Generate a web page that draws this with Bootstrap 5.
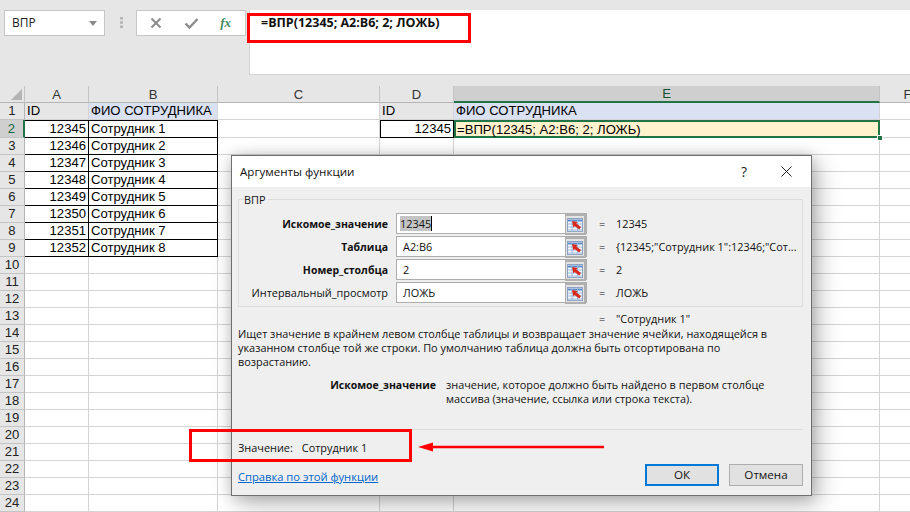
<!DOCTYPE html>
<html lang="ru">
<head>
<meta charset="utf-8">
<title>ВПР</title>
<link rel="stylesheet" href="https://cdn.jsdelivr.net/npm/bootstrap@5.3.0/dist/css/bootstrap.min.css">
<style>
html,body{width:910px;height:512px;overflow:hidden;margin:0;background:#fff}
.xl-app{width:910px;height:512px;overflow:hidden;font-family:"Liberation Sans",Arial,sans-serif;color:#000}
.xl-bar{height:86px;background:#e6e6e6;padding:10px 0 11px 4px;align-items:flex-start}
.xl-name{width:101px;height:26px;background:#fff;border:1px solid #c6c6c6;padding:0 7px;font:12px/24px "Open Sans",sans-serif;color:#222}
.xl-caret{width:0;height:0;border:4px solid transparent;border-top:5px solid #8a8a8a;border-bottom:0}
.xl-dots{width:31px;padding:7px 0 0 15px;line-height:0}
.xl-fbtns{width:110px;height:26px;background:#fff;border:1px solid #c6c6c6;padding:0 14px 0 13px}
.xl-fx{font:italic bold 13px/14px "Liberation Serif",serif;color:#3f8a60}
.xl-input{width:661px;height:65px;background:#fff;border:1px solid #d4d4d4;border-right:0;border-top:0;margin-left:3px}
.xl-ftext{font:bold 12.5px/16px "Open Sans",sans-serif;padding:5px 0 0 11px;color:#111}
.xl-grid{table-layout:fixed;border-collapse:separate;border-spacing:0;width:936px}
.xl-grid th,.xl-grid td{height:17px;padding:0 2px;font-size:13.1px;line-height:16px;font-weight:400;white-space:nowrap;overflow:hidden;border-right:1px solid #d4d4d4;border-bottom:1px solid #d4d4d4;vertical-align:bottom}
.xl-grid thead th{background:#e6e6e6;text-align:center;height:16px;border-right:1px solid #c4c4c4;border-bottom:1px solid #b5b5b5;color:#333;line-height:15px}
.xl-grid thead th.xl-sel{background:#cfcfcf;color:#0f5132;border-bottom:2px solid #217346}
.xl-grid tbody th{background:#e6e6e6;text-align:center;border-right:1px solid #b5b5b5;border-bottom:1px solid #c4c4c4;color:#222;padding:0}
.xl-grid tbody th.xl-sel{background:#cfcfcf;color:#0f6b3e;border-right:2px solid #217346}
.xl-corner{position:relative}
.xl-corner::after{content:"";position:absolute;right:2px;bottom:2px;border-style:solid;border-width:0 0 11px 11px;border-color:transparent transparent #b4b4b4 transparent}
.xl-grey{background:#e7e6e6}
.xl-blue{background:#d9e1f2}
.xl-num{text-align:right}
.xl-box{border:1px solid #000!important}
.xl-box-n{border-top:0!important}
.xl-box-l{border-left:0!important}
.xl-cur{position:relative;background:#fff2cc;overflow:visible!important;border:0!important;box-shadow:inset 0 0 0 2px #217346;padding-left:3px!important}
.xl-handle{position:absolute;right:-3px;bottom:-3px;width:6px;height:6px;background:#217346;border:1px solid #fff}
.xl-dlg{left:231px;top:155px;width:581px;height:341px;background:#efefef;border:1px solid #6f6f6f;box-shadow:6px 8px 22px rgba(0,0,0,.28),0 0 12px rgba(0,0,0,.16);font:10.9px/14px "Open Sans",sans-serif;color:#111}
.xl-dtitle{height:31px;background:#fff;padding:0 8px;font-size:11.6px}
.xl-dctl{font-size:14px;color:#222;gap:34px;padding-right:11px}
.xl-group{margin:12px 8px 0 6px;height:108px;border:1px solid #dcdcdc;padding:12px 0 0 0;position:relative}
.xl-legend{position:absolute;left:5px;top:-7px;background:#efefef;padding:0 2px 0 0;line-height:14px}
.xl-argrow{height:23px}
.xl-arglab{width:157px;text-align:right;padding-right:8px;white-space:nowrap}
.xl-field{width:191px;height:21px;border:1px solid #adadad;background:#fff}
.xl-val{flex:1 1 0;padding-left:6px;line-height:19px;color:#111}
.xl-val-first{padding-left:3px}
.xl-pick{width:21px;height:21px;background:#e3e3e3;border:2px solid #b0b0b0;border-left-width:1px;padding:1px}
.xl-hl{background:#c4c4c4;border-right:1px solid #000}
.xl-eq{width:23px;text-align:center;padding-left:7px}
.xl-res{padding-left:6px;white-space:nowrap}
.xl-b{font-weight:700;font-size:10.5px}
.xl-sum{padding:5px 6px 0 355px}
.xl-desc{padding:1px 33px 0 6px;margin:0}
.xl-param{padding:9px 30px 0 6px;margin:0}
.xl-plab{width:208px;text-align:right;font-weight:700;font-size:10.5px;padding-right:10px;flex:none}
.xl-rule{height:1px;background:#dcdcdc;margin:23px 8px 0 6px}
.xl-foot{padding:11px 8px 0 6px}
.xl-sp{margin-left:9px}
.xl-row-btm{margin-top:9px}
.xl-link{color:#0066cc;text-decoration:underline;font-size:11.2px;padding-top:3px}
.xl-gap{gap:10px}
.xl-btn{width:74px;height:22px;border:1px solid #adadad;background:#e1e1e1;border-radius:0;font:11.6px/18px "Open Sans",sans-serif;color:#111;padding:0}
.xl-btn-main{border:2px solid #0078d7}
.xl-red{border:3px solid #f00}
.xl-r1{left:247px;top:13px;width:224px;height:30px}
.xl-r2{left:189px;top:429px;width:223px;height:33px}
.xl-arrow{left:416px;top:440px}
</style>
</head>
<body>
<div class="xl-app position-relative">
  <div class="xl-bar d-flex">
    <div class="xl-name d-flex justify-content-between align-items-center"><span>ВПР</span><span class="xl-caret"></span></div>
    <div class="xl-dots"><svg width="3" height="11" viewBox="0 0 3 11"><path d="M0 0h3v2.500H0zM0 4.200h3v2.500H0zM0 8.500h3V11H0z" fill="#b4b4b4"/></svg></div>
    <div class="xl-fbtns d-flex justify-content-between align-items-center">
      <svg width="12" height="12" viewBox="0 0 12 12"><path d="M1.500 1.500l9 9M10.500 1.500l-9 9" stroke="#8c8c8c" stroke-width="2" fill="none"/></svg>
      <svg width="15" height="12" viewBox="0 0 15 12"><path d="M1.500 6.500l4 4 8-8.500" stroke="#8c8c8c" stroke-width="2.400" fill="none"/></svg>
      <span class="xl-fx">fx</span>
    </div>
    <div class="xl-input"><div class="xl-ftext">=ВПР(12345; A2:B6; 2; ЛОЖЬ)</div></div>
  </div>
  <table class="xl-grid">
    <colgroup><col style="width:25px"><col style="width:64px"><col style="width:129px"><col style="width:162px"><col style="width:74px"><col style="width:426px"><col></colgroup>
    <thead><tr><th class="xl-corner"></th><th>A</th><th>B</th><th>C</th><th>D</th><th class="xl-sel">E</th><th>F</th></tr></thead>
    <tbody>
      <tr><th>1</th><td class="xl-grey">ID</td><td class="xl-blue">ФИО СОТРУДНИКА</td><td></td><td class="xl-grey">ID</td><td class="xl-blue">ФИО СОТРУДНИКА</td><td></td></tr>
      <tr><th class="xl-sel">2</th><td class="xl-num xl-box xl-box-l">12345</td><td class="xl-box xl-box-l">Сотрудник 1</td><td></td><td class="xl-num xl-box">12345</td><td class="xl-cur">=ВПР(12345; A2:B6; 2; ЛОЖЬ)<span class="xl-handle"></span></td><td></td></tr>
      <tr><th>3</th><td class="xl-num xl-box xl-box-n xl-box-l">12346</td><td class="xl-box xl-box-n xl-box-l">Сотрудник 2</td><td></td><td></td><td></td><td></td></tr>
      <tr><th>4</th><td class="xl-num xl-box xl-box-n xl-box-l">12347</td><td class="xl-box xl-box-n xl-box-l">Сотрудник 3</td><td></td><td></td><td></td><td></td></tr>
      <tr><th>5</th><td class="xl-num xl-box xl-box-n xl-box-l">12348</td><td class="xl-box xl-box-n xl-box-l">Сотрудник 4</td><td></td><td></td><td></td><td></td></tr>
      <tr><th>6</th><td class="xl-num xl-box xl-box-n xl-box-l">12349</td><td class="xl-box xl-box-n xl-box-l">Сотрудник 5</td><td></td><td></td><td></td><td></td></tr>
      <tr><th>7</th><td class="xl-num xl-box xl-box-n xl-box-l">12350</td><td class="xl-box xl-box-n xl-box-l">Сотрудник 6</td><td></td><td></td><td></td><td></td></tr>
      <tr><th>8</th><td class="xl-num xl-box xl-box-n xl-box-l">12351</td><td class="xl-box xl-box-n xl-box-l">Сотрудник 7</td><td></td><td></td><td></td><td></td></tr>
      <tr><th>9</th><td class="xl-num xl-box xl-box-n xl-box-l">12352</td><td class="xl-box xl-box-n xl-box-l">Сотрудник 8</td><td></td><td></td><td></td><td></td></tr>
      <tr><th>10</th><td></td><td></td><td></td><td></td><td></td><td></td></tr>
      <tr><th>11</th><td></td><td></td><td></td><td></td><td></td><td></td></tr>
      <tr><th>12</th><td></td><td></td><td></td><td></td><td></td><td></td></tr>
      <tr><th>13</th><td></td><td></td><td></td><td></td><td></td><td></td></tr>
      <tr><th>14</th><td></td><td></td><td></td><td></td><td></td><td></td></tr>
      <tr><th>15</th><td></td><td></td><td></td><td></td><td></td><td></td></tr>
      <tr><th>16</th><td></td><td></td><td></td><td></td><td></td><td></td></tr>
      <tr><th>17</th><td></td><td></td><td></td><td></td><td></td><td></td></tr>
      <tr><th>18</th><td></td><td></td><td></td><td></td><td></td><td></td></tr>
      <tr><th>19</th><td></td><td></td><td></td><td></td><td></td><td></td></tr>
      <tr><th>20</th><td></td><td></td><td></td><td></td><td></td><td></td></tr>
      <tr><th>21</th><td></td><td></td><td></td><td></td><td></td><td></td></tr>
      <tr><th>22</th><td></td><td></td><td></td><td></td><td></td><td></td></tr>
      <tr><th>23</th><td></td><td></td><td></td><td></td><td></td><td></td></tr>
      <tr><th>24</th><td></td><td></td><td></td><td></td><td></td><td></td></tr>
    </tbody>
  </table>

  <div class="xl-dlg position-absolute">
    <div class="xl-dtitle d-flex justify-content-between align-items-center">
      <span>Аргументы функции</span>
      <span class="d-flex align-items-center xl-dctl"><span>?</span>
        <svg width="11" height="11" viewBox="0 0 11 11"><path d="M.5.500l10 10M10.500.500l-10 10" stroke="#222" stroke-width="1" fill="none"/></svg></span>
    </div>
    <div class="xl-group">
      <div class="xl-legend">ВПР</div>
      <div class="xl-argrow d-flex align-items-center"><div class="xl-arglab xl-b">Искомое_значение</div><div class="xl-field d-flex"><div class="xl-val xl-val-first"><span class="xl-hl">12345</span></div><div class="xl-pick"><svg width="17" height="15" viewBox="0 0 17 15"><use href="#xl-refedit"/></svg></div></div><div class="xl-eq">=</div><div class="xl-res">12345</div></div>
      <div class="xl-argrow d-flex align-items-center"><div class="xl-arglab xl-b">Таблица</div><div class="xl-field d-flex"><div class="xl-val">A2:B6</div><div class="xl-pick"><svg width="17" height="15" viewBox="0 0 17 15"><use href="#xl-refedit"/></svg></div></div><div class="xl-eq">=</div><div class="xl-res">{12345;"Сотрудник 1":12346;"Сот...</div></div>
      <div class="xl-argrow d-flex align-items-center"><div class="xl-arglab xl-b">Номер_столбца</div><div class="xl-field d-flex"><div class="xl-val">2</div><div class="xl-pick"><svg width="17" height="15" viewBox="0 0 17 15"><use href="#xl-refedit"/></svg></div></div><div class="xl-eq">=</div><div class="xl-res">2</div></div>
      <div class="xl-argrow d-flex align-items-center"><div class="xl-arglab">Интервальный_просмотр</div><div class="xl-field d-flex"><div class="xl-val">ЛОЖЬ</div><div class="xl-pick"><svg width="17" height="15" viewBox="0 0 17 15"><use href="#xl-refedit"/></svg></div></div><div class="xl-eq">=</div><div class="xl-res">ЛОЖЬ</div></div>
    </div>
    <div class="d-flex xl-sum"><div class="xl-eq">=</div><div class="xl-res">"Сотрудник 1"</div></div>
    <p class="xl-desc">Ищет значение в крайнем левом столбце таблицы и возвращает значение ячейки, находящейся в указанном столбце той же строки. По умолчанию таблица должна быть отсортирована по возрастанию.</p>
    <div class="d-flex xl-param"><div class="xl-plab">Искомое_значение</div><div>значение, которое должно быть найдено в первом столбце массива (значение, ссылка или строка текста).</div></div>
    <div class="xl-rule"></div>
    <div class="xl-foot">
      <div>Значение:<span class="xl-sp">Сотрудник 1</span></div>
      <div class="d-flex justify-content-between align-items-center xl-row-btm">
        <a class="xl-link" href="#">Справка по этой функции</a>
        <div class="d-flex xl-gap"><button class="btn xl-btn xl-btn-main" type="button">ОК</button><button class="btn xl-btn" type="button">Отмена</button></div>
      </div>
    </div>
  </div>

  <div class="xl-red xl-r1 position-absolute"></div>
  <div class="xl-red xl-r2 position-absolute"></div>
  <svg class="xl-arrow position-absolute" width="190" height="14" viewBox="0 0 190 14"><path d="M188 7H14" stroke="#f00" stroke-width="2.400"/><path d="M2 7l15-4.500v9z" fill="#f00"/></svg>
  <svg width="0" height="0" class="position-absolute"><defs><g id="xl-refedit"><rect x=".5" y=".5" width="15" height="13" fill="#f3f6fb" stroke="#8fa3c0"/><path d="M1 2.500h14" stroke="#5b8ccc" stroke-width="2"/><path d="M1 6h14M1 9h14M1 12h14M5 1v13M10.500 1v13" stroke="#9db8da" stroke-width="1" fill="none"/><path d="M5 3l5.500 1-1.200 1.600 4.700 3.500-1.700 2.300-4.700-3.500-1.200 1.600z" fill="#d9291c"/></g></defs></svg>
</div>
<script src="https://cdn.jsdelivr.net/npm/bootstrap@5.3.0/dist/js/bootstrap.bundle.min.js"></script>
</body>
</html>
